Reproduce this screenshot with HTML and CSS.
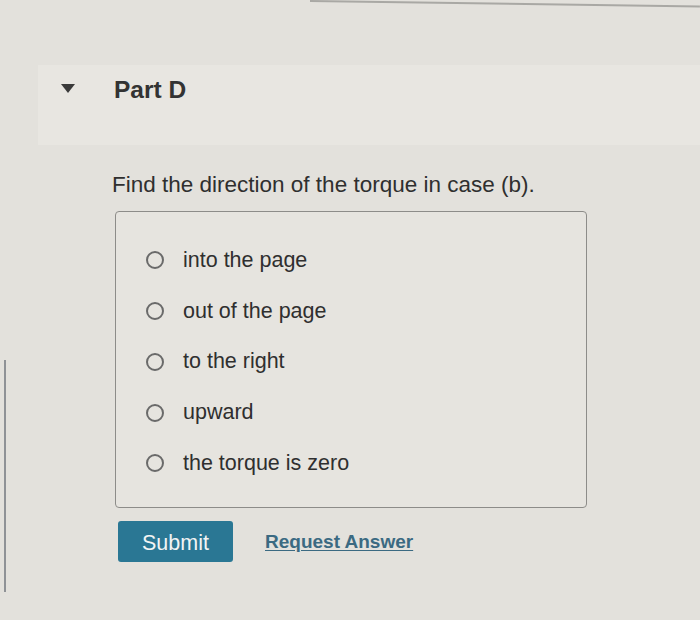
FILE: index.html
```html
<!DOCTYPE html>
<html>
<head>
<meta charset="utf-8">
<link rel="stylesheet" href="styles.css">
</head>
<body>
<div class="page">
  <div class="topline"></div>
  <div class="leftline"></div>
  <div class="part-header">
    <span class="caret"></span>
    <h2 class="part-title">Part D</h2>
  </div>
  <div class="part-body">
    <p class="question">Find the direction of the torque in case (b).</p>
    <div class="options">
      <label class="option"><span class="radio"></span><span class="opt-text">into the page</span></label>
      <label class="option"><span class="radio"></span><span class="opt-text">out of the page</span></label>
      <label class="option"><span class="radio"></span><span class="opt-text">to the right</span></label>
      <label class="option"><span class="radio"></span><span class="opt-text">upward</span></label>
      <label class="option"><span class="radio"></span><span class="opt-text">the torque is zero</span></label>
    </div>
    <div class="actions">
      <button class="submit">Submit</button>
      <a class="request" href="#">Request Answer</a>
    </div>
  </div>
</div>
</body>
</html>
```
FILE: styles.css
```css
html, body {
  margin: 0;
  padding: 0;
}
body {
  width: 700px;
  height: 620px;
  overflow: hidden;
  background: #e3e1dc;
  font-family: "Liberation Sans", Arial, sans-serif;
  color: #3a3a3a;
}
.page {
  position: relative;
  width: 700px;
  height: 620px;
  padding-top: 65px;
  box-sizing: border-box;
}
.topline {
  position: absolute;
  left: 310px;
  top: 0;
  width: 390px;
  height: 2px;
  background: #a9a8a4;
  transform: rotate(0.8deg);
  transform-origin: left top;
}
.leftline {
  position: absolute;
  left: 4px;
  top: 360px;
  width: 2px;
  height: 232px;
  background: #8f9296;
}
.part-header {
  margin-left: 38px;
  height: 80px;
  background: #e8e6e1;
  display: flex;
  align-items: flex-start;
  padding-top: 11px;
  box-sizing: border-box;
}
.caret {
  width: 0;
  height: 0;
  margin-left: 23px;
  margin-top: 8px;
  border-left: 7px solid transparent;
  border-right: 7px solid transparent;
  border-top: 9px solid #3a3a3a;
}
.part-title {
  margin: 0 0 0 39px;
  font-size: 24.5px;
  font-weight: bold;
  line-height: 28px;
  color: #333;
}
.part-body {
  padding-left: 112px;
  padding-top: 24px;
}
.question {
  margin: 0;
  font-size: 22.5px;
  line-height: 32px;
  color: #2f2f2f;
}
.options {
  margin-top: 10px;
  margin-left: 3px;
  width: 472px;
  height: 297px;
  box-sizing: border-box;
  border: 1.5px solid #8d8c89;
  border-radius: 4px;
  background: #e6e4df;
  padding-top: 23px;
  display: flex;
  flex-direction: column;
}
.option {
  display: flex;
  align-items: center;
  height: 50.75px;
  padding-left: 30px;
}
.radio {
  width: 14px;
  height: 14px;
  border: 2px solid #6a6a6a;
  border-radius: 50%;
  box-sizing: content-box;
  flex: none;
}
.opt-text {
  margin-left: 19px;
  font-size: 21.5px;
  color: #2f2f2f;
}
.actions {
  margin-top: 13px;
  margin-left: 6px;
  display: flex;
  align-items: center;
}
.submit {
  width: 115px;
  height: 41px;
  border: none;
  border-radius: 3px;
  background: #2a7794;
  color: #f2f4f4;
  font-family: "Liberation Sans", Arial, sans-serif;
  font-size: 21.5px;
  line-height: 41px;
  padding: 2px 0 0;
  box-sizing: border-box;
}
.request {
  margin-left: 32px;
  font-size: 19px;
  font-weight: bold;
  color: #3b6a82;
  text-decoration: underline;
  text-underline-offset: 2px;
}
```
